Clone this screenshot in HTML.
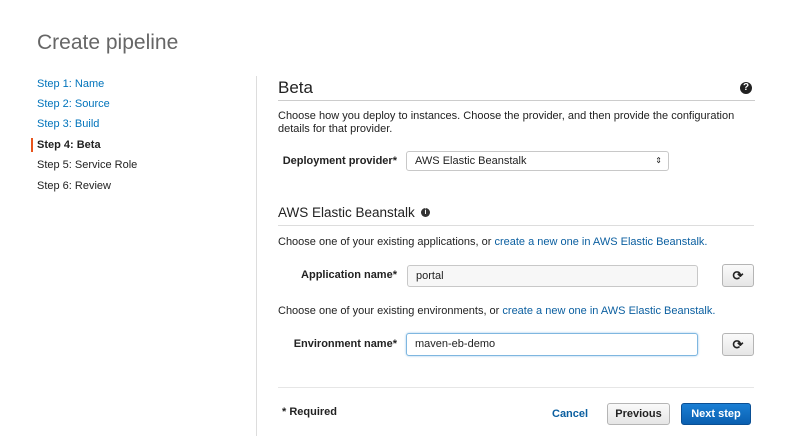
<!DOCTYPE html>
<html><head><style>
body{margin:0;width:798px;height:436px;background:#fff;font-family:"Liberation Sans",Arial,sans-serif;color:#222;position:relative;overflow:hidden}
.a{position:absolute;white-space:nowrap}
h1{position:absolute;left:37px;top:31px;margin:0;font-weight:normal;font-size:21px;color:#666}
.s{font-size:11px;color:#0073bb;left:37px}
.k{color:#222}
.t{font-size:11px}
.lk{color:#0b5fa0}
.lab{position:absolute;right:401px;font-size:11px;font-weight:bold;white-space:nowrap}
.inp{position:absolute;border:1px solid #c8c8c8;border-radius:3px;background:#f7f7f7;font-size:11px;box-sizing:border-box;padding-left:8px;line-height:20px}
.btn{position:absolute;border:1px solid #b5b5b5;border-radius:3px;background:linear-gradient(#fafafa,#e6e6e6);box-sizing:border-box;font-size:11px;font-weight:bold;text-align:center}
.b{font-weight:bold}
.hr{position:absolute;height:1px;background:#ddd}
</style></head><body>
<h1>Create pipeline</h1>
<div class="a s" style="top:78px">Step 1: Name</div>
<div class="a s" style="top:98px">Step 2: Source</div>
<div class="a s" style="top:118px">Step 3: Build</div>
<div class="a" style="left:31px;top:138px;width:2px;height:14px;background:#e8541c"></div>
<div class="a s k b" style="top:139px">Step 4: Beta</div>
<div class="a s k" style="top:159px">Step 5: Service Role</div>
<div class="a s k" style="top:180px">Step 6: Review</div>
<div class="a" style="left:256px;top:76px;width:1px;height:360px;background:#ddd"></div>
<div class="a" style="left:278px;top:78px;font-size:17px">Beta</div>
<div class="a" style="left:740px;top:82px;width:12px;height:12px;border-radius:50%;background:#222;color:#fff;font-size:10px;font-weight:bold;text-align:center;line-height:12px">?</div>
<div class="hr" style="left:278px;top:100px;width:477px;background:#ccc"></div>
<div class="a t" style="left:278px;top:110px;line-height:13px">Choose how you deploy to instances. Choose the provider, and then provide the configuration<br>details for that provider.</div>
<div class="lab" style="top:155px">Deployment provider*</div>
<div class="inp" style="left:406px;top:151px;width:263px;height:20px;background:#fff;line-height:18px">AWS Elastic Beanstalk<span style="position:absolute;right:6px;font-size:8px">&#8661;</span></div>
<div class="a" style="left:278px;top:205px;font-size:13.5px">AWS Elastic Beanstalk</div>
<div class="a" style="left:421px;top:208px;width:9px;height:9px;border-radius:50%;background:#333;color:#fff;font-size:7px;font-weight:bold;text-align:center;line-height:9px">i</div>
<div class="hr" style="left:278px;top:225px;width:476px"></div>
<div class="a t" style="left:278px;top:236px">Choose one of your existing applications, or <span class="lk">create a new one in AWS Elastic Beanstalk.</span></div>
<div class="lab" style="top:269px">Application name*</div>
<div class="inp" style="left:407px;top:265px;width:291px;height:22px">portal</div>
<div class="btn" style="left:722px;top:264px;width:32px;height:23px;line-height:21px;font-size:13px">&#10227;</div>
<div class="a t" style="left:278px;top:305px">Choose one of your existing environments, or <span class="lk">create a new one in AWS Elastic Beanstalk.</span></div>
<div class="lab" style="top:338px">Environment name*</div>
<div class="inp" style="left:406px;top:333px;width:292px;height:23px;border-color:#7fb7e0;background:#fff;box-shadow:0 0 2px #9cc8ea">maven-eb-demo</div>
<div class="btn" style="left:722px;top:333px;width:32px;height:23px;line-height:21px;font-size:13px">&#10227;</div>
<div class="hr" style="left:278px;top:387px;width:476px;background:#e6e6e6"></div>
<div class="a t b" style="left:282px;top:406px">* Required</div>
<div class="a t b lk" style="left:552px;top:408px">Cancel</div>
<div class="btn" style="left:607px;top:403px;width:63px;height:22px;line-height:20px">Previous</div>
<div class="btn" style="left:681px;top:403px;width:70px;height:22px;line-height:20px;background:linear-gradient(#1a7fd4,#0a5fb0);border-color:#0a4f94;color:#fff">Next step</div>
</body></html>
